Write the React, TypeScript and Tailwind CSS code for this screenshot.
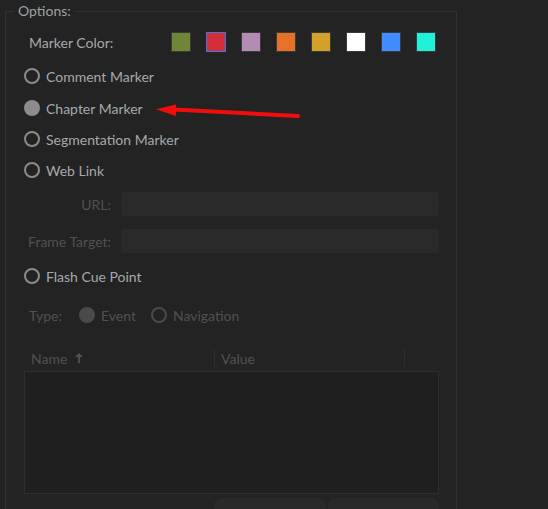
const font = { fontFamily: "Lato, 'Open Sans', sans-serif" };

const swatches = ["#6f8537", "#d42d3c", "#b28cb4", "#e8712a", "#d2a12c", "#ffffff", "#418cff", "#1ff2d8"];

function Radio({ label, filled, dim }: { label: string; filled?: boolean; dim?: boolean }) {
  const c = dim ? "border-[#4a4a4a]" : "border-[#8c8c8c]";
  return (
    <div className="flex h-[20px] items-center gap-[6px]">
      {filled ? (
        <span className={`h-[16px] w-[16px] rounded-full ${dim ? "bg-[#4a4a4a]" : "bg-[#8c8c8c]"}`} />
      ) : (
        <span className={`h-[16px] w-[16px] rounded-full border-2 ${c}`} />
      )}
      <span className={dim ? "text-[#515151]" : "text-[#a6a9ac]"}>{label}</span>
    </div>
  );
}

function Field({ label }: { label: string }) {
  return (
    <div className="flex h-[24px] items-center gap-[10px]">
      <span className="w-[87px] text-right text-[#515151]">{label}</span>
      <div className="h-[24px] flex-1 rounded-[2px] bg-[#2a2a2a]" />
    </div>
  );
}

export default function App() {
  return (
    <div className="relative h-[509px] w-[548px] overflow-hidden bg-[#232323] text-[14px]" style={font}>
      <div className="pl-[5px] pt-[11px]">
        <div className="relative h-[520px] w-[452px] border border-b-0 border-[#313131] pl-[18px] pr-[17px]">
          <span className="absolute -top-[10px] left-[8px] bg-[#232323] px-[4px] leading-[18px] text-[#9ea2a6]">Options:</span>

          <div className="mt-[20px] flex h-[20px] items-center">
            <span className="ml-[5px] w-[142px] text-[#a6a9ac]">Marker Color:</span>
            <div className="flex gap-[15px]">
              {swatches.map((s, i) => (
                <span
                  key={s}
                  className={`h-[20px] w-[20px] border ${i === 1 ? "border-[#3a7dd8]" : "border-[#3a3a3a]"}`}
                  style={{ backgroundColor: s }}
                />
              ))}
            </div>
          </div>

          <div className="mt-[14px]"><Radio label="Comment Marker" /></div>
          <div className="mt-[12px]"><Radio label="Chapter Marker" filled /></div>
          <div className="mt-[11px]"><Radio label="Segmentation Marker" /></div>
          <div className="mt-[11px]"><Radio label="Web Link" /></div>

          <div className="mt-[12px]"><Field label="URL:" /></div>
          <div className="mt-[13px]"><Field label="Frame Target:" /></div>

          <div className="mt-[13px]"><Radio label="Flash Cue Point" /></div>

          <div className="mt-[19px] flex h-[20px] items-center">
            <span className="ml-[5px] w-[50px] text-[#515151]">Type:</span>
            <Radio label="Event" filled dim />
            <div className="ml-[15px]"><Radio label="Navigation" dim /></div>
          </div>

          <div className="mt-[20px] flex h-[26px] items-center text-[#515151]">
            <div className="flex w-[190px] items-center gap-[8px] pl-[7px]">
              Name
              <svg width="8" height="10" viewBox="0 0 8 10" fill="#515151">
                <path d="M4 0 L8 4 H4.9 V10 H3.1 V4 H0 Z" />
              </svg>
            </div>
            <div className="h-[17px] w-px bg-[#2e2e2e]" />
            <div className="w-[189px] pl-[6px]">Value</div>
            <div className="h-[17px] w-px bg-[#2e2e2e]" />
          </div>

          <div className="h-[123px] border border-[#2e2e2e] bg-[#1f1f1f]" />

          <div className="mt-[4px] flex justify-end gap-[2px]">
            <div className="h-[20px] w-[112px] rounded-t-[8px] bg-[#292929]" />
            <div className="h-[20px] w-[111px] rounded-t-[8px] bg-[#292929]" />
          </div>
        </div>
      </div>

      <svg className="absolute left-0 top-0" width="548" height="509">
        <line x1="174" y1="109.6" x2="298" y2="116" stroke="#f20d0d" strokeWidth="4" strokeLinecap="round" />
        <polygon points="156,109.3 176,104.5 176,116" fill="#f20d0d" />
      </svg>
    </div>
  );
}
